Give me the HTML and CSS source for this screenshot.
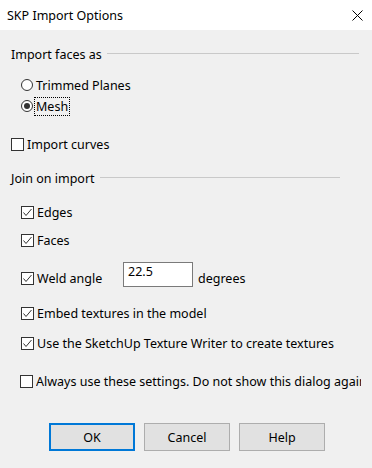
FILE: index.html
```html
<!DOCTYPE html>
<html>
<head>
<meta charset="utf-8">
<link rel="stylesheet" href="styles.css">
</head>
<body>
<div class="dialog">
  <div class="titlebar">
    <span class="title">SKP Import Options</span>
    <svg class="close" width="11" height="11" viewBox="0 0 11 11"><path d="M0.5 0.5 L10.5 10.5 M10.5 0.5 L0.5 10.5" stroke="#000" stroke-width="1" fill="none"/></svg>
  </div>
  <div class="content">
    <div class="row group g1"><span class="glabel">Import faces as</span><span class="gline"></span></div>
    <div class="row ind r1"><span class="radio"></span><span class="lbl">Trimmed Planes</span></div>
    <div class="row ind r2"><span class="radio on"></span><span class="lbl focus">Mesh</span></div>
    <div class="row r3"><span class="check"></span><span class="lbl">Import curves</span></div>
    <div class="row group g2"><span class="glabel">Join on import</span><span class="gline"></span></div>
    <div class="row ind r4"><span class="check on"><svg width="11" height="11" viewBox="0 0 11 11"><path d="M1.5 5.5 L4 8.5 L9.5 2" stroke="#333" stroke-width="1" fill="none"/></svg></span><span class="lbl">Edges</span></div>
    <div class="row ind r5"><span class="check on"><svg width="11" height="11" viewBox="0 0 11 11"><path d="M1.5 5.5 L4 8.5 L9.5 2" stroke="#333" stroke-width="1" fill="none"/></svg></span><span class="lbl">Faces</span></div>
    <div class="row ind r6"><span class="check on"><svg width="11" height="11" viewBox="0 0 11 11"><path d="M1.5 5.5 L4 8.5 L9.5 2" stroke="#333" stroke-width="1" fill="none"/></svg></span><span class="lbl weld">Weld angle</span><span class="field">22.5</span><span class="lbl unit">degrees</span></div>
    <div class="row ind r7"><span class="check on"><svg width="11" height="11" viewBox="0 0 11 11"><path d="M1.5 5.5 L4 8.5 L9.5 2" stroke="#333" stroke-width="1" fill="none"/></svg></span><span class="lbl">Embed textures in the model</span></div>
    <div class="row ind r8"><span class="check on"><svg width="11" height="11" viewBox="0 0 11 11"><path d="M1.5 5.5 L4 8.5 L9.5 2" stroke="#333" stroke-width="1" fill="none"/></svg></span><span class="lbl">Use the SketchUp Texture Writer to create textures</span></div>
    <div class="row ind r9"><span class="check"></span><span class="lbl clip">Always use these settings. Do not show this dialog again</span></div>
    <div class="buttons">
      <span class="btn default">OK</span>
      <span class="btn">Cancel</span>
      <span class="btn">Help</span>
    </div>
  </div>
</div>
</body>
</html>
```

FILE: styles.css
```css
html, body {
  margin: 0;
  padding: 0;
  background: #f0f0f0;
}
.dialog {
  width: 372px;
  height: 468px;
  overflow: hidden;
  background: #f0f0f0;
  font-family: "Noto Sans", "Open Sans", sans-serif;
  font-size: 12.5px;
  color: #000;
}
.titlebar {
  height: 30px;
  background: #fff;
  display: flex;
  align-items: center;
  justify-content: space-between;
  padding: 0 9px 0 7px;
}
.title {
  font-size: 12.5px;
}
.close {
  display: block;
}
.content {
  display: flex;
  flex-direction: column;
}
.row {
  height: 20px;
  display: flex;
  align-items: center;
  padding-left: 11px;
  white-space: nowrap;
}
.ind {
  padding-left: 21px;
}
.g1 { margin-top: 14px; }
.r1 { margin-top: 11px; }
.r2 { margin-top: 1px; }
.r3 { margin-top: 18px; }
.g2 { margin-top: 14px; }
.r4 { margin-top: 14px; }
.r5 { margin-top: 8px; }
.r6 { margin-top: 18px; }
.r7 { margin-top: 15px; }
.r8 { margin-top: 10px; }
.r9 { margin-top: 18px; padding-left: 20px; }
.glabel {
  margin-right: 5px;
}
.gline {
  flex: 1;
  height: 0;
  border-top: 1px solid #c9c9c9;
  margin-top: -1px;
}
.g1 .gline { margin-right: 13px; }
.g2 .gline { margin-right: 32px; }
.radio {
  width: 12px;
  height: 12px;
  box-sizing: border-box;
  border: 1px solid #333;
  border-radius: 50%;
  background: #fff;
  display: flex;
  align-items: center;
  justify-content: center;
  flex: none;
}
.radio.on::after {
  content: "";
  width: 6px;
  height: 6px;
  border-radius: 50%;
  background: #333;
}
.check {
  width: 13px;
  height: 13px;
  box-sizing: border-box;
  border: 1px solid #333;
  background: #fff;
  display: flex;
  align-items: center;
  justify-content: center;
  flex: none;
}
.check svg { display: block; }
.lbl {
  margin-left: 3px;
}
.focus {
  outline: 1px dotted #000;
  padding: 0 1px;
  margin-left: 2px;
  line-height: 17px;
}
.weld {
  width: 86px;
}
.field {
  width: 70px;
  height: 25px;
  box-sizing: border-box;
  border: 1px solid #7a7a7a;
  background: #fff;
  padding: 0 4px;
  line-height: 18px;
  font-size: 12.5px;
  margin-bottom: 8px;
  flex: none;
}
.unit {
  margin-left: 5px;
}
.clip {
  overflow: hidden;
  width: 325px;
  flex: none;
}
.buttons {
  margin-top: 32px;
  display: flex;
  gap: 9px;
  padding-left: 49px;
}
.btn {
  width: 86px;
  height: 28px;
  box-sizing: border-box;
  border: 1px solid #adadad;
  background: #e1e1e1;
  display: flex;
  align-items: center;
  justify-content: center;
}
.btn.default {
  border: 2px solid #0078d7;
}
```
